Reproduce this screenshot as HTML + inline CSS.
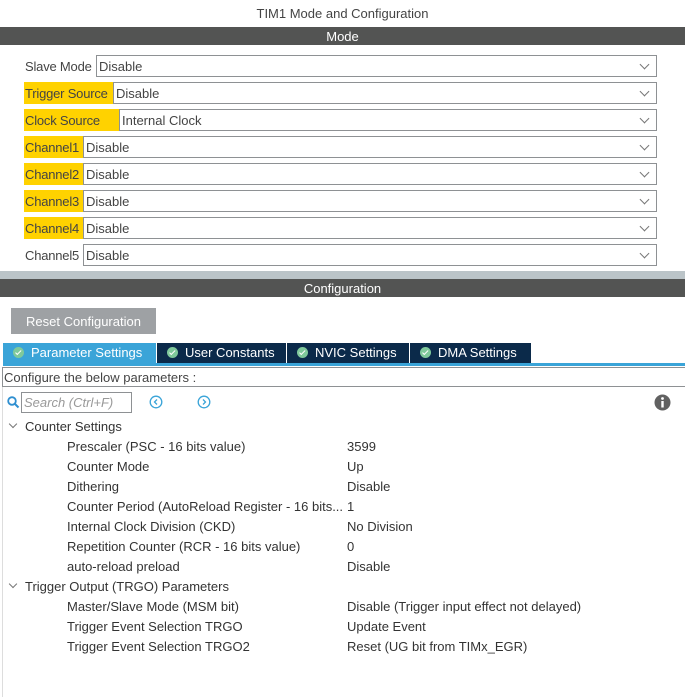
<!DOCTYPE html>
<html><head><meta charset="utf-8"><style>
*{margin:0;padding:0;box-sizing:border-box}
body{width:685px;height:697px;background:#fff;font-family:"Liberation Sans",Arial,sans-serif;font-size:13px;color:#3c3c3c;position:relative;overflow:hidden}
.a{position:absolute;white-space:nowrap}
.bar{position:absolute;left:0;width:685px;background:#535453;color:#fff;text-align:center;font-size:13px}
.lbl{position:absolute;height:22px;line-height:23px;padding-left:1px;color:#444;letter-spacing:-0.2px}
.hl{background:#ffd200}
.sel{position:absolute;height:22px;border:1px solid #8e9194;line-height:22px;padding-left:2px;color:#444;background:#fff}
.sel:after{content:"";position:absolute;right:8px;top:5px;width:6px;height:6px;border-right:1px solid #777;border-bottom:1px solid #777;transform:rotate(45deg)}
.tab{position:absolute;top:343px;height:20px;line-height:20px;color:#fff;background:#0b2a4a;padding-left:10px}
.tab i{display:inline-block;width:11px;height:11px;border-radius:50%;background:#7fc99b;margin-right:7px;vertical-align:-1px;position:relative}
.tab i:after{content:"";position:absolute;left:3.5px;top:2px;width:2px;height:4.5px;border-right:1.5px solid #fff;border-bottom:1.5px solid #fff;transform:rotate(45deg)}
.r{position:absolute;left:67px;height:20px;line-height:22px;color:#333}
.v{position:absolute;left:347px;height:20px;line-height:22px;color:#333}
.chev{position:absolute;width:6px;height:6px;border-right:1px solid #777;border-bottom:1px solid #777;transform:rotate(45deg)}
</style></head><body>
<div class="a" style="top:6px;left:0;width:685px;text-align:center;color:#444">TIM1 Mode and Configuration</div>
<div class="bar" style="top:27px;height:18px;line-height:19px">Mode</div>

<div class="lbl" style="left:24px;top:55px">Slave Mode</div><div class="sel" style="left:96px;top:55px;width:561px">Disable</div>
<div class="lbl hl" style="left:24px;top:82px;width:89px">Trigger Source</div><div class="sel" style="left:113px;top:82px;width:544px">Disable</div>
<div class="lbl hl" style="left:24px;top:109px;width:96px">Clock Source</div><div class="sel" style="left:119px;top:109px;width:538px">Internal Clock</div>
<div class="lbl hl" style="left:24px;top:136px;width:59px">Channel1</div><div class="sel" style="left:83px;top:136px;width:574px">Disable</div>
<div class="lbl hl" style="left:24px;top:163px;width:59px">Channel2</div><div class="sel" style="left:83px;top:163px;width:574px">Disable</div>
<div class="lbl hl" style="left:24px;top:190px;width:59px">Channel3</div><div class="sel" style="left:83px;top:190px;width:574px">Disable</div>
<div class="lbl hl" style="left:24px;top:217px;width:59px">Channel4</div><div class="sel" style="left:83px;top:217px;width:574px">Disable</div>
<div class="lbl" style="left:24px;top:244px">Channel5</div><div class="sel" style="left:83px;top:244px;width:574px">Disable</div>

<div class="a" style="top:271px;left:0;width:685px;height:8px;background:#bbc4c8"></div>
<div class="bar" style="top:279px;height:18px;line-height:19px">Configuration</div>
<div class="a" style="left:11px;top:308px;width:145px;height:26px;background:#9ea1a4;color:#fff;line-height:27px;text-align:center">Reset Configuration</div>

<div class="tab" style="left:3px;width:153px;background:#3aa4d8"><i></i>Parameter Settings</div>
<div class="tab" style="left:157px;width:129px"><i></i>User Constants</div>
<div class="tab" style="left:287px;width:122px"><i></i>NVIC Settings</div>
<div class="tab" style="left:410px;width:121px"><i></i>DMA Settings</div>
<div class="a" style="left:3px;top:363px;width:682px;height:3px;background:#3aa4d8"></div>
<div class="a" style="left:2px;top:367px;width:683px;height:20px;border:1px solid #8e9194;border-right:none;line-height:20px;padding-left:1px;color:#444">Configure the below parameters :</div>
<div class="a" style="left:2px;top:387px;width:1px;height:310px;background:#ddd"></div>

<svg class="a" style="left:7px;top:396px" width="13" height="13" viewBox="0 0 13 13"><circle cx="5" cy="5" r="3.8" fill="none" stroke="#2f8fd0" stroke-width="1.8"/><path d="M8 8l3.5 3.5" stroke="#2f8fd0" stroke-width="2"/></svg>
<div class="a" style="left:21px;top:392px;width:111px;height:21px;border:1px solid #8e9194;line-height:20px;padding-left:2px;color:#999;font-style:italic">Search (Ctrl+F)</div>
<svg class="a" style="left:149px;top:395px" width="14" height="14" viewBox="0 0 14 14"><circle cx="7" cy="7" r="5.8" fill="none" stroke="#3aa4d8" stroke-width="1.3"/><path d="M8 4.5L5.5 7 8 9.5" fill="none" stroke="#3aa4d8" stroke-width="1.3"/></svg>
<svg class="a" style="left:197px;top:395px" width="14" height="14" viewBox="0 0 14 14"><circle cx="7" cy="7" r="5.8" fill="none" stroke="#3aa4d8" stroke-width="1.3"/><path d="M6 4.5L8.5 7 6 9.5" fill="none" stroke="#3aa4d8" stroke-width="1.3"/></svg>
<svg class="a" style="left:654px;top:394px" width="17" height="17" viewBox="0 0 17 17"><circle cx="8.5" cy="8.5" r="8" fill="#616161"/><circle cx="8.5" cy="4.5" r="1.4" fill="#fff"/><rect x="7.3" y="7" width="2.4" height="6.5" fill="#fff"/></svg>

<div class="chev" style="left:10px;top:421px"></div>
<div class="a" style="left:25px;top:416px;height:20px;line-height:22px;color:#333">Counter Settings</div>
<div class="r" style="top:436px">Prescaler (PSC - 16 bits value)</div><div class="v" style="top:436px">3599</div>
<div class="r" style="top:456px">Counter Mode</div><div class="v" style="top:456px">Up</div>
<div class="r" style="top:476px">Dithering</div><div class="v" style="top:476px">Disable</div>
<div class="r" style="top:496px">Counter Period (AutoReload Register - 16 bits...</div><div class="v" style="top:496px">1</div>
<div class="r" style="top:516px">Internal Clock Division (CKD)</div><div class="v" style="top:516px">No Division</div>
<div class="r" style="top:536px">Repetition Counter (RCR - 16 bits value)</div><div class="v" style="top:536px">0</div>
<div class="r" style="top:556px">auto-reload preload</div><div class="v" style="top:556px">Disable</div>
<div class="chev" style="left:10px;top:581px"></div>
<div class="a" style="left:25px;top:576px;height:20px;line-height:22px;color:#333">Trigger Output (TRGO) Parameters</div>
<div class="r" style="top:596px">Master/Slave Mode (MSM bit)</div><div class="v" style="top:596px">Disable (Trigger input effect not delayed)</div>
<div class="r" style="top:616px">Trigger Event Selection TRGO</div><div class="v" style="top:616px">Update Event</div>
<div class="r" style="top:636px">Trigger Event Selection TRGO2</div><div class="v" style="top:636px">Reset (UG bit from TIMx_EGR)</div>
</body></html>
